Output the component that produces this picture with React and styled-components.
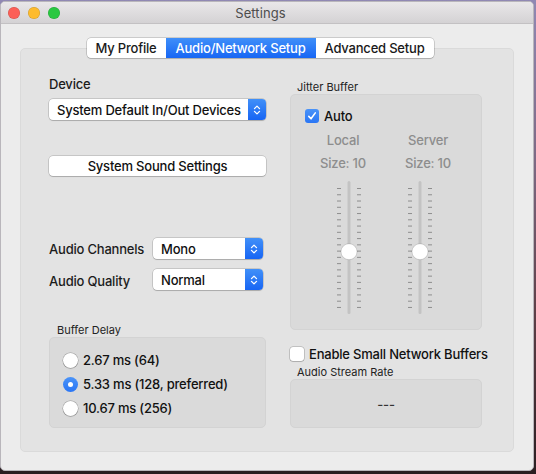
import React from 'react';
import styled, { createGlobalStyle } from 'styled-components';

const GlobalStyle = createGlobalStyle`
  html, body {
    margin: 0;
    padding: 0;
  }
  body {
    font-family: Inter, "Liberation Sans", sans-serif;
    letter-spacing: -0.2px;
    -webkit-font-smoothing: antialiased;
  }
  * {
    box-sizing: border-box;
  }
`;

const Desktop = styled.div`
  width: 536px;
  height: 474px;
  padding: 1px 0 0 0;
  background: linear-gradient(180deg, #9088b3 0%, #7c6882 35%, #5e4048 65%, #2a1e21 100%);
  overflow: hidden;
`;

const Window = styled.div`
  width: 534px;
  height: 470px;
  display: flex;
  flex-direction: column;
  background: #ececec;
  border: 1px solid #b9b6bb;
  border-radius: 5px;
  overflow: hidden;
`;

const TitleBar = styled.div`
  height: 22px;
  flex-shrink: 0;
  display: flex;
  align-items: center;
  justify-content: center;
  padding-right: 13px;
  background: linear-gradient(180deg, #e9e7e9 0%, #d4d2d4 100%);
  border-bottom: 1px solid #c3c1c3;
  position: relative;
`;

const Lights = styled.div`
  position: absolute;
  left: 7px;
  top: 5px;
  display: flex;
  gap: 8px;
`;

const Light = styled.span`
  width: 12px;
  height: 12px;
  border-radius: 50%;
  background: ${p => p.color};
  box-shadow: inset 0 0 0 0.5px rgba(0, 0, 0, 0.18);
`;

const Title = styled.div`
  font-size: 13px;
  color: #4d4d4d;
  letter-spacing: 0.1px;
`;

const Body = styled.div`
  flex: 1;
  padding: 14px 19px 0 19px;
  display: flex;
  flex-direction: column;
`;

const TabBar = styled.div`
  display: flex;
  justify-content: center;
  padding-right: 14px;
  margin-bottom: -10px;
  position: relative;
  z-index: 1;
`;

const TabGroup = styled.div`
  display: flex;
  height: 20px;
  background: #fff;
  border-radius: 4px;
  box-shadow: 0 0 0 0.5px rgba(0, 0, 0, 0.28), 0 1px 1px rgba(0, 0, 0, 0.12);
  overflow: hidden;
`;

const Tab = styled.div`
  width: ${p => p.w}px;
  display: flex;
  align-items: center;
  justify-content: center;
  font-size: 13px;
  font-weight: 500;
  color: ${p => (p.active ? '#fff' : '#1a1a1a')};
  background: ${p => (p.active ? 'linear-gradient(180deg, #3f8ff9 0%, #1766f4 100%)' : 'transparent')};
`;

const Panel = styled.div`
  width: 494px;
  height: 404px;
  background: #e3e3e3;
  border: 1px solid #dadada;
  border-radius: 5px;
  padding: 27px 31px 0 28px;
  display: flex;
  gap: 24px;
`;

const LeftCol = styled.div`
  width: 217px;
  display: flex;
  flex-direction: column;
`;

const RightCol = styled.div`
  width: 192px;
  display: flex;
  flex-direction: column;
`;

const Label = styled.div`
  font-size: 13px;
  font-weight: 500;
  line-height: 16px;
  color: #1c1c1c;
  margin-bottom: ${p => p.mb || 0}px;
`;

const SmallLabel = styled.div`
  font-size: 11px;
  line-height: 14px;
  color: #222;
  letter-spacing: 0;
  padding-left: ${p => p.indent}px;
  margin-top: ${p => p.mt || 0}px;
`;

const SelectBox = styled.div`
  width: ${p => p.w}px;
  height: 21px;
  flex-shrink: 0;
  display: flex;
  align-items: center;
  background: #fff;
  border-radius: 4px;
  box-shadow: 0 0 0 0.5px rgba(0, 0, 0, 0.25), 0 1px 1px rgba(0, 0, 0, 0.14);
  overflow: hidden;
`;

const SelectText = styled.span`
  flex: 1;
  padding-left: 8px;
  font-size: 13px;
  font-weight: 500;
  color: #111;
  white-space: nowrap;
`;

const Stepper = styled.span`
  width: 18px;
  height: 100%;
  display: flex;
  align-items: center;
  justify-content: center;
  background: linear-gradient(180deg, #4190f8 0%, #1765f4 100%);
`;

const PushButton = styled.div`
  height: 20px;
  margin-top: ${p => p.mt}px;
  display: flex;
  align-items: center;
  justify-content: center;
  background: #fff;
  border-radius: 4px;
  box-shadow: 0 0 0 0.5px rgba(0, 0, 0, 0.25), 0 1px 1px rgba(0, 0, 0, 0.14);
  font-size: 13px;
  font-weight: 500;
  color: #111;
`;

const FormRow = styled.div`
  display: flex;
  align-items: center;
  margin-top: ${p => p.mt}px;
`;

const RowLabel = styled(Label)`
  width: 104px;
  padding-top: ${p => p.drop || 0}px;
`;

const GroupBox = styled.div`
  height: ${p => p.h}px;
  background: #dadada;
  border: 1px solid #d3d3d3;
  border-radius: 5px;
  padding: ${p => p.pad};
  display: flex;
  flex-direction: column;
`;

const RadioRow = styled.div`
  height: 24px;
  display: flex;
  align-items: center;
  gap: 5px;
  font-size: 13px;
  font-weight: 500;
  color: #111;
`;

const RadioDot = styled.span`
  width: 15px;
  height: 15px;
  border-radius: 50%;
  display: flex;
  align-items: center;
  justify-content: center;
  background: ${p => (p.on ? 'linear-gradient(180deg, #4a93f8 0%, #2a76f5 100%)' : '#fff')};
  box-shadow: ${p => (p.on ? 'none' : '0 0 0 0.5px rgba(0,0,0,0.3), 0 1px 1px rgba(0,0,0,0.1)')};

  &::after {
    content: '';
    display: ${p => (p.on ? 'block' : 'none')};
    width: 5px;
    height: 5px;
    border-radius: 50%;
    background: #fff;
  }
`;

const CheckRow = styled.div`
  height: 18px;
  display: flex;
  align-items: center;
  gap: 5px;
  margin-top: ${p => p.mt || 0}px;
  font-size: 13px;
  font-weight: 500;
  color: #111;
  white-space: nowrap;
`;

const CheckBox = styled.span`
  width: 14px;
  height: 14px;
  flex-shrink: 0;
  border-radius: 3px;
  display: flex;
  align-items: center;
  justify-content: center;
  background: ${p => (p.on ? 'linear-gradient(180deg, #4a93f8 0%, #2a76f5 100%)' : '#fff')};
  box-shadow: ${p => (p.on ? 'none' : '0 0 0 0.5px rgba(0,0,0,0.3), 0 1px 1px rgba(0,0,0,0.1)')};
`;

const DimRow = styled.div`
  display: flex;
  gap: 15px;
  padding-left: 3px;
  margin-top: ${p => p.mt}px;
`;

const DimText = styled.div`
  width: 70px;
  text-align: center;
  font-size: 13px;
  font-weight: 500;
  line-height: 16px;
  color: #8d8d8d;
`;

const SliderRow = styled.div`
  display: flex;
  gap: 31px;
  padding-left: 24px;
  margin-top: 10px;
`;

const RateValue = styled.div`
  flex: 1;
  display: flex;
  align-items: center;
  justify-content: center;
  font-size: 13px;
  font-weight: 500;
  color: #333;
`;

const Chevrons = () => (
  <svg width="8" height="12" viewBox="0 0 8 12">
    <path d="M1.5 4.6 L4 2.1 L6.5 4.6 M1.5 7.4 L4 9.9 L6.5 7.4" fill="none" stroke="#fff" strokeWidth="1.3" strokeLinecap="round" strokeLinejoin="round" />
  </svg>
);

const Select = ({ w, value }) => (
  <SelectBox w={w}>
    <SelectText>{value}</SelectText>
    <Stepper><Chevrons /></Stepper>
  </SelectBox>
);

const Check = ({ on }) => (
  <CheckBox on={on}>
    {on && (
      <svg width="10" height="10" viewBox="0 0 10 10">
        <path d="M1.8 5.4 L4 7.8 L8.3 1.9" fill="none" stroke="#fff" strokeWidth="1.6" strokeLinecap="round" strokeLinejoin="round" />
      </svg>
    )}
  </CheckBox>
);

const ticks = Array.from({ length: 20 }, (_, i) => 7 + i * 6.26);

const Slider = () => (
  <svg width="40" height="134" viewBox="0 0 40 134">
    <rect x="18.5" y="0" width="3" height="133" rx="1.5" fill="#c3c3c3" />
    {ticks.map(y => (
      <g key={y}>
        <rect x="8" y={y} width="4" height="1" fill="#8e8e8e" />
        <rect x="28" y={y} width="4" height="1" fill="#8e8e8e" />
      </g>
    ))}
    <circle cx="20" cy="70.7" r="8" fill="#fff" stroke="rgba(0,0,0,0.18)" strokeWidth="0.8" />
  </svg>
);

const bufferOptions = [
  { text: '2.67 ms (64)', on: false },
  { text: '5.33 ms (128, preferred)', on: true },
  { text: '10.67 ms (256)', on: false },
];

export default function App() {
  return (
    <>
      <GlobalStyle />
      <Desktop>
        <Window>
          <TitleBar>
            <Lights>
              <Light color="#fc5f57" />
              <Light color="#fdbb2e" />
              <Light color="#29c840" />
            </Lights>
            <Title>Settings</Title>
          </TitleBar>
          <Body>
            <TabBar>
              <TabGroup>
                <Tab w={79}>My Profile</Tab>
                <Tab w={150} active>Audio/Network Setup</Tab>
                <Tab w={118}>Advanced Setup</Tab>
              </TabGroup>
            </TabBar>
            <Panel>
              <LeftCol>
                <Label mb={7}>Device</Label>
                <Select w={217} value="System Default In/Out Devices" />
                <PushButton mt={36}>System Sound Settings</PushButton>

                <FormRow mt={62}>
                  <RowLabel>Audio Channels</RowLabel>
                  <Select w={110} value="Mono" />
                </FormRow>
                <FormRow mt={10}>
                  <RowLabel drop={3}>Audio Quality</RowLabel>
                  <Select w={110} value="Normal" />
                </FormRow>

                <SmallLabel indent={8} mt={33}>Buffer Delay</SmallLabel>
                <GroupBox h={91} pad="10px 0 0 13px">
                  {bufferOptions.map(o => (
                    <RadioRow key={o.text}>
                      <RadioDot on={o.on} />
                      {o.text}
                    </RadioRow>
                  ))}
                </GroupBox>
              </LeftCol>

              <RightCol>
                <SmallLabel indent={7} mt={4}>Jitter Buffer</SmallLabel>
                <GroupBox h={236} pad="12px 0 0 14px">
                  <CheckRow>
                    <Check on />
                    Auto
                  </CheckRow>
                  <DimRow mt={7}>
                    <DimText>Local</DimText>
                    <DimText>Server</DimText>
                  </DimRow>
                  <DimRow mt={7}>
                    <DimText>Size: 10</DimText>
                    <DimText>Size: 10</DimText>
                  </DimRow>
                  <SliderRow>
                    <Slider />
                    <Slider />
                  </SliderRow>
                </GroupBox>

                <CheckRow mt={15}>
                  <Check />
                  Enable Small Network Buffers
                </CheckRow>
                <SmallLabel indent={7} mt={2}>Audio Stream Rate</SmallLabel>
                <GroupBox h={49} pad="0">
                  <RateValue>---</RateValue>
                </GroupBox>
              </RightCol>
            </Panel>
          </Body>
        </Window>
      </Desktop>
    </>
  );
}
